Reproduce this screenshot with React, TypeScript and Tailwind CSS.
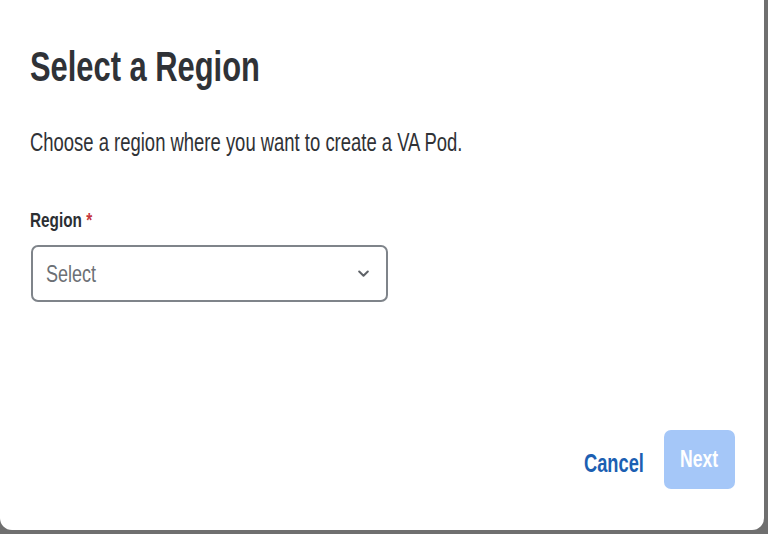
import React from "react";

const font = { fontFamily: '"Liberation Sans", Arial, sans-serif' };

export default function App() {
  return (
    <div className="w-[768px] h-[534px] bg-[#6f6f6f] overflow-hidden" style={font}>
      <div className="w-[764px] h-[530px] bg-white rounded-b-[12px] flex flex-col pl-[30px] pr-[29px]">
        <h1 className="mt-[43px] h-[48px] text-[42px] leading-[48px] font-bold text-[#2f3237] whitespace-nowrap">
          <span className="inline-block origin-left scale-x-[0.735]">Select a Region</span>
        </h1>
        <p className="mt-[35px] h-[32px] text-[25px] leading-[32px] text-[#303236] whitespace-nowrap">
          <span className="inline-block origin-left scale-x-[0.738]">
            Choose a region where you want to create a VA Pod.
          </span>
        </p>
        <label className="mt-[48px] h-[28px] text-[21px] leading-[28px] font-bold text-[#2c2f33] whitespace-nowrap">
          <span className="inline-block origin-left scale-x-[0.73]">
            Region <span className="text-[#c6363c]">*</span>
          </span>
        </label>
        <div className="mt-[11px] ml-px w-[357px] h-[57px] border-2 border-[#7f848a] rounded-[7px] flex items-center justify-between pl-[13px] pr-[17px]">
          <span className="inline-block origin-left scale-x-[0.75] text-[24px] text-[#6c7075] whitespace-nowrap">
            Select
          </span>
          <svg width="11" height="8" viewBox="0 0 11 8" fill="none">
            <path d="M1.2 1.5 L5.5 5.8 L9.8 1.5" stroke="#5f6368" strokeWidth="2" strokeLinecap="round" strokeLinejoin="round" />
          </svg>
        </div>
        <div className="flex-1" />
        <div className="flex items-center justify-end gap-[20px] pb-[41px]">
          <button className="w-[60px] h-[34px] mt-[6px] text-left text-[25px] leading-[34px] font-bold text-[#1c5fb2] whitespace-nowrap">
            <span className="inline-block origin-left scale-x-[0.73]">Cancel</span>
          </button>
          <button className="w-[71px] h-[59px] rounded-[7px] bg-[#a5c7f8] text-white text-[24px] font-bold flex items-center justify-center pb-[2px] whitespace-nowrap">
            <span className="inline-block origin-center scale-x-[0.73]">Next</span>
          </button>
        </div>
      </div>
    </div>
  );
}
